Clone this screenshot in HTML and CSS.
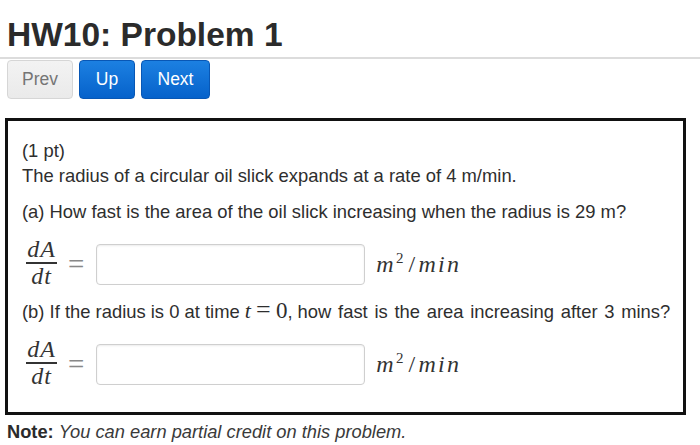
FILE: index.html
```html
<!DOCTYPE html>
<html>
<head>
<meta charset="utf-8">
<link rel="stylesheet" href="styles.css">
</head>
<body>
<h1 class="title">HW10: Problem 1</h1>
<div class="rule"></div>
<div class="nav">
  <span class="btn btn-gray btn-prev">Prev</span>
  <span class="btn btn-blue btn-up">Up</span>
  <span class="btn btn-blue btn-next">Next</span>
</div>
<div class="problem">
  <p class="para">(1 pt)<br>The radius of a circular oil slick expands at a rate of 4 m/min.</p>
  <p class="para">(a) How fast is the area of the oil slick increasing when the radius is 29 m?</p>
  <div class="answer">
    <span class="frac"><span class="num">dA</span><span class="bar"></span><span class="den">dt</span></span>
    <span class="eq">=</span>
    <span class="field"></span>
    <span class="unit">m<sup>2</sup><span class="slash">/</span>min</span>
  </div>
  <p class="para">(b) If the radius is 0 at time <span class="mi">t</span> <span class="mo">=</span> <span class="mn">0</span>, <span class="tail">how fast is the area increasing after 3 mins?</span></p>
  <div class="answer">
    <span class="frac"><span class="num">dA</span><span class="bar"></span><span class="den">dt</span></span>
    <span class="eq">=</span>
    <span class="field"></span>
    <span class="unit">m<sup>2</sup><span class="slash">/</span>min</span>
  </div>
</div>
<p class="note"><b>Note:</b> <i>You can earn partial credit on this problem.</i></p>
</body>
</html>
```
FILE: styles.css
```css
html, body {
  margin: 0;
  padding: 0;
  background: #fff;
}
body {
  font-family: "Liberation Sans", Arial, sans-serif;
  color: #333;
  width: 700px;
  height: 445px;
  overflow: hidden;
}
.title {
  margin: 0;
  padding: 14px 0 0 7px;
  height: 42px;
  font-size: 33.5px;
  line-height: 42px;
  font-weight: bold;
  color: #2b2b2b;
}
.rule {
  height: 2px;
  background: #dcdcdc;
  margin-top: 1px;
}
.nav {
  display: flex;
  gap: 6px;
  padding: 1px 0 0 7px;
}
.btn {
  display: flex;
  align-items: center;
  justify-content: center;
  height: 39px;
  box-sizing: border-box;
  padding: 0;
  font-size: 17.5px;
  border-radius: 4px;
}
.btn-prev { width: 66px; }
.btn-up { width: 56px; }
.btn-next { width: 69px; }
.btn-gray {
  background: linear-gradient(#f3f3f3, #eaeaea);
  border: 1px solid #d6d6d6;
  color: #757575;
}
.btn-blue {
  background: linear-gradient(#1c80e1, #0662cb);
  border: 1px solid #0857b5;
  color: #fff;
}
.problem {
  margin: 19px 0 0 5px;
  width: 681px;
  height: 297px;
  box-sizing: border-box;
  border: 3px solid #111;
  padding: 17px 6px 0 14px;
  color: #2e2e2e;
}
.para {
  margin: 0 0 11px 0;
  font-size: 18.4px;
  line-height: 25px;
  white-space: nowrap;
}
.tail {
  word-spacing: 1.6px;
}
.answer {
  display: flex;
  align-items: center;
  margin: 0 0 5px 4px;
  height: 58px;
}
.frac {
  display: inline-flex;
  flex-direction: column;
  align-items: center;
  width: 31px;
  padding-bottom: 4px;
  font-family: "Liberation Serif", "Times New Roman", serif;
  font-style: italic;
  font-size: 24px;
  color: #333;
}
.num {
  line-height: 22px;
  height: 22px;
  letter-spacing: 1px;
}
.den {
  line-height: 20px;
  height: 20px;
  letter-spacing: 1px;
}
.bar {
  width: 31px;
  height: 2px;
  background: #333;
  margin: 2px 0 2px 0;
}
.eq {
  font-family: "Liberation Serif", serif;
  font-size: 29px;
  line-height: 30px;
  color: #888;
  margin: 0 12px 0 11px;
}
.field {
  width: 269px;
  height: 41px;
  box-sizing: border-box;
  border: 1px solid #cfcfcf;
  border-radius: 4px;
  box-shadow: inset 0 1px 2px rgba(0,0,0,0.08);
  background: #fff;
}
.unit {
  margin-left: 11px;
  font-family: "Liberation Serif", "Times New Roman", serif;
  font-style: italic;
  font-size: 24px;
  letter-spacing: 2.2px;
  color: #333;
}
.unit sup {
  font-style: normal;
  font-size: 15px;
  vertical-align: 9px;
  line-height: 0;
}
.slash {
  font-style: normal;
  margin: 0 1px 0 3px;
}
.mi {
  font-family: "Liberation Serif", serif;
  font-style: italic;
  font-size: 22px;
}
.mo {
  font-family: "Liberation Serif", serif;
  font-size: 26px;
  line-height: 20px;
}
.mn {
  font-family: "Liberation Serif", serif;
  font-size: 23px;
}
.note {
  margin: 6px 0 0 7px;
  font-size: 18.3px;
  line-height: 22px;
  color: #2b2b2b;
}
.note i {
  color: #3a3a3a;
}
```
